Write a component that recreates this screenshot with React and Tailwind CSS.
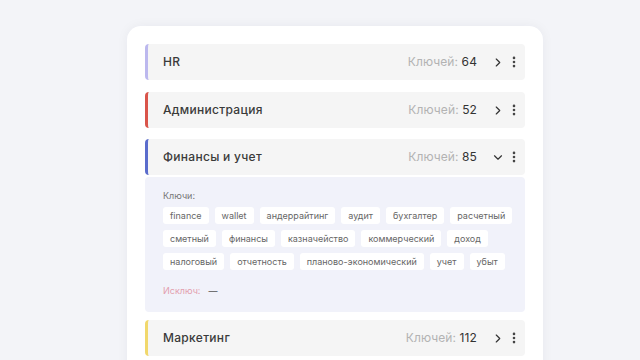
import { ChevronRight, ChevronDown, EllipsisVertical } from 'lucide-react';

const keyRows = [
  ['finance', 'wallet', 'андеррайтинг', 'аудит', 'бухгалтер', 'расчетный'],
  ['сметный', 'финансы', 'казначейство', 'коммерческий', 'доход'],
  ['налоговый', 'отчетность', 'планово-экономический', 'учет', 'убыт'],
];

function Row({ title, count, accent, open, className = '' }) {
  return (
    <div className={`h-[36px] bg-[#f5f5f5] rounded-[4px] border-l-[3px] ${accent} flex items-center pl-[15px] pr-[4px] ${className}`}>
      <span className="text-[12px] font-medium text-[#3a3a3a] tracking-[0.3px]">{title}</span>
      <span className="ml-auto text-[12px] text-[#b3b3b3] tracking-[0.1px]">
        Ключей: <span className="text-[#333]">{count}</span>
      </span>
      <span className="ml-[14px] w-[14px] flex justify-center text-[#333]">
        {open ? <ChevronDown size={15} strokeWidth={2} /> : <ChevronRight size={15} strokeWidth={2} />}
      </span>
      <span className="ml-[2px] text-[#444]">
        <EllipsisVertical size={14} strokeWidth={2.5} />
      </span>
    </div>
  );
}

export default function App() {
  return (
    <div className="w-[640px] h-[360px] overflow-hidden bg-[#f3f4f8] pt-[26px]" style={{ fontFamily: 'Inter, "Noto Sans", sans-serif' }}>
      <div className="ml-[127px] w-[416px] h-[400px] bg-white rounded-[14px] shadow-[0_0_12px_rgba(20,30,60,0.05)] px-[18px] pt-[18px]">
        <Row title="HR" count="64" accent="border-[#bcb8ee]" className="mb-[12px]" />
        <Row title="Администрация" count="52" accent="border-[#d9544a]" className="mb-[11px]" />
        <Row title="Финансы и учет" count="85" accent="border-[#5a6ccc]" open />
        <div className="mt-[2px] h-[135px] bg-[#f1f2fa] rounded-[4px] px-[18px] pt-[12px]">
          <div className="text-[9px] text-[#777] leading-[14px]">Ключи:</div>
          <div className="mt-[4px] flex flex-col gap-[6px]">
            {keyRows.map((row, i) => (
              <div key={i} className="flex gap-[6px]">
                {row.map((k) => (
                  <span key={k} className="h-[17px] px-[7px] shrink-0 whitespace-nowrap bg-white rounded-[3px] flex items-center text-[9px] text-[#666]">
                    {k}
                  </span>
                ))}
              </div>
            ))}
          </div>
          <div className="mt-[14px] flex items-center gap-[8px] text-[9px]">
            <span className="text-[#e3a0ae]">Исключ:</span>
            <span className="text-[#555]">—</span>
          </div>
        </div>
        <Row title="Маркетинг" count="112" accent="border-[#f1d86c]" className="mt-[8px]" />
      </div>
    </div>
  );
}
